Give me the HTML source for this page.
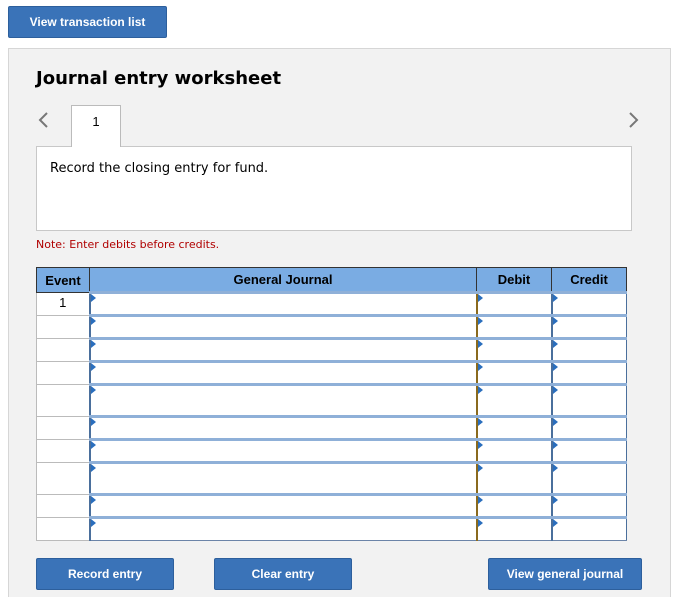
<!DOCTYPE html>
<html><head><style>
html,body{margin:0;width:686px;height:597px;overflow:hidden}
body{background:#fff;position:relative;font-family:"Liberation Sans",Arial,sans-serif}
.btn{position:absolute;background:#3a73b8;color:#fff;font-weight:bold;font-size:12px;text-align:center;border-radius:2px;border:1px solid #2d5f9c;box-sizing:border-box}
.panel{position:absolute;left:8px;top:48px;width:663px;height:549px;background:#f2f2f2;border:1px solid #d6d6d6;border-bottom:none;box-sizing:border-box}
h1{position:absolute;left:36px;top:68px;margin:0;font:bold 18px "DejaVu Sans",sans-serif;color:#000}
.tab{position:absolute;left:71px;top:105px;width:50px;height:42px;background:#fff;border:1px solid #bbb;border-bottom:none;box-sizing:border-box;text-align:center;font-size:13px;line-height:32px}
.box{position:absolute;left:36px;top:146px;width:596px;height:85px;background:#fff;border:1px solid #c8c8c8;box-sizing:border-box;font:13px "DejaVu Sans",sans-serif;padding:14px 13px}
.note{position:absolute;left:36px;top:238px;font:11px "DejaVu Sans",sans-serif;color:#b00000}
table{position:absolute;left:36px;top:267px;border-collapse:collapse;table-layout:fixed}
th{background:#7aace3;height:23px;font-size:13px;border:1px solid #333;padding:0}
td{padding:0;background:#fff;position:relative}
td.e{border:1px solid #bbb;text-align:center;font-size:13px;vertical-align:top;line-height:20px}
td.c{border-top:3px solid #8fb0d8;border-bottom:1px solid #6b84a8;border-left:2px solid #4a6f9c;border-right:1px solid #4a6f9c}
td.d{border-left:2px solid #8a6a1e}
td.c::before{content:"";position:absolute;left:0;top:0;border-left:5px solid #2a6ebd;border-top:4px solid transparent;border-bottom:4px solid transparent}
</style></head><body>
<div class="btn" style="left:8px;top:6px;width:159px;height:32px;line-height:30px">View transaction list</div>
<div class="panel"></div>
<h1>Journal entry worksheet</h1>
<svg style="position:absolute;left:38px;top:112px" width="12" height="16"><path d="M9 1 L2 8 L9 15" stroke="#777" stroke-width="2" fill="none"/></svg>
<svg style="position:absolute;left:627px;top:112px" width="12" height="16"><path d="M3 1 L10 8 L3 15" stroke="#777" stroke-width="2" fill="none"/></svg>
<div class="box">Record the closing entry for fund.</div>
<div class="tab">1</div>
<div class="note">Note: Enter debits before credits.</div>
<table>
<colgroup><col style="width:53px"><col style="width:387px"><col style="width:75px"><col style="width:75px"></colgroup>
<tr><th>Event</th><th>General Journal</th><th>Debit</th><th>Credit</th></tr>
<tr style="height:23px"><td class="e">1</td><td class="c"></td><td class="c d"></td><td class="c"></td></tr>
<tr style="height:23px"><td class="e"></td><td class="c"></td><td class="c d"></td><td class="c"></td></tr>
<tr style="height:23px"><td class="e"></td><td class="c"></td><td class="c d"></td><td class="c"></td></tr>
<tr style="height:23px"><td class="e"></td><td class="c"></td><td class="c d"></td><td class="c"></td></tr>
<tr style="height:32px"><td class="e"></td><td class="c"></td><td class="c d"></td><td class="c"></td></tr>
<tr style="height:23px"><td class="e"></td><td class="c"></td><td class="c d"></td><td class="c"></td></tr>
<tr style="height:23px"><td class="e"></td><td class="c"></td><td class="c d"></td><td class="c"></td></tr>
<tr style="height:32px"><td class="e"></td><td class="c"></td><td class="c d"></td><td class="c"></td></tr>
<tr style="height:23px"><td class="e"></td><td class="c"></td><td class="c d"></td><td class="c"></td></tr>
<tr style="height:23px"><td class="e"></td><td class="c"></td><td class="c d"></td><td class="c"></td></tr>
</table>
<div class="btn" style="left:36px;top:558px;width:138px;height:32px;line-height:30px">Record entry</div>
<div class="btn" style="left:214px;top:558px;width:138px;height:32px;line-height:30px">Clear entry</div>
<div class="btn" style="left:488px;top:558px;width:154px;height:32px;line-height:30px">View general journal</div>
</body></html>
